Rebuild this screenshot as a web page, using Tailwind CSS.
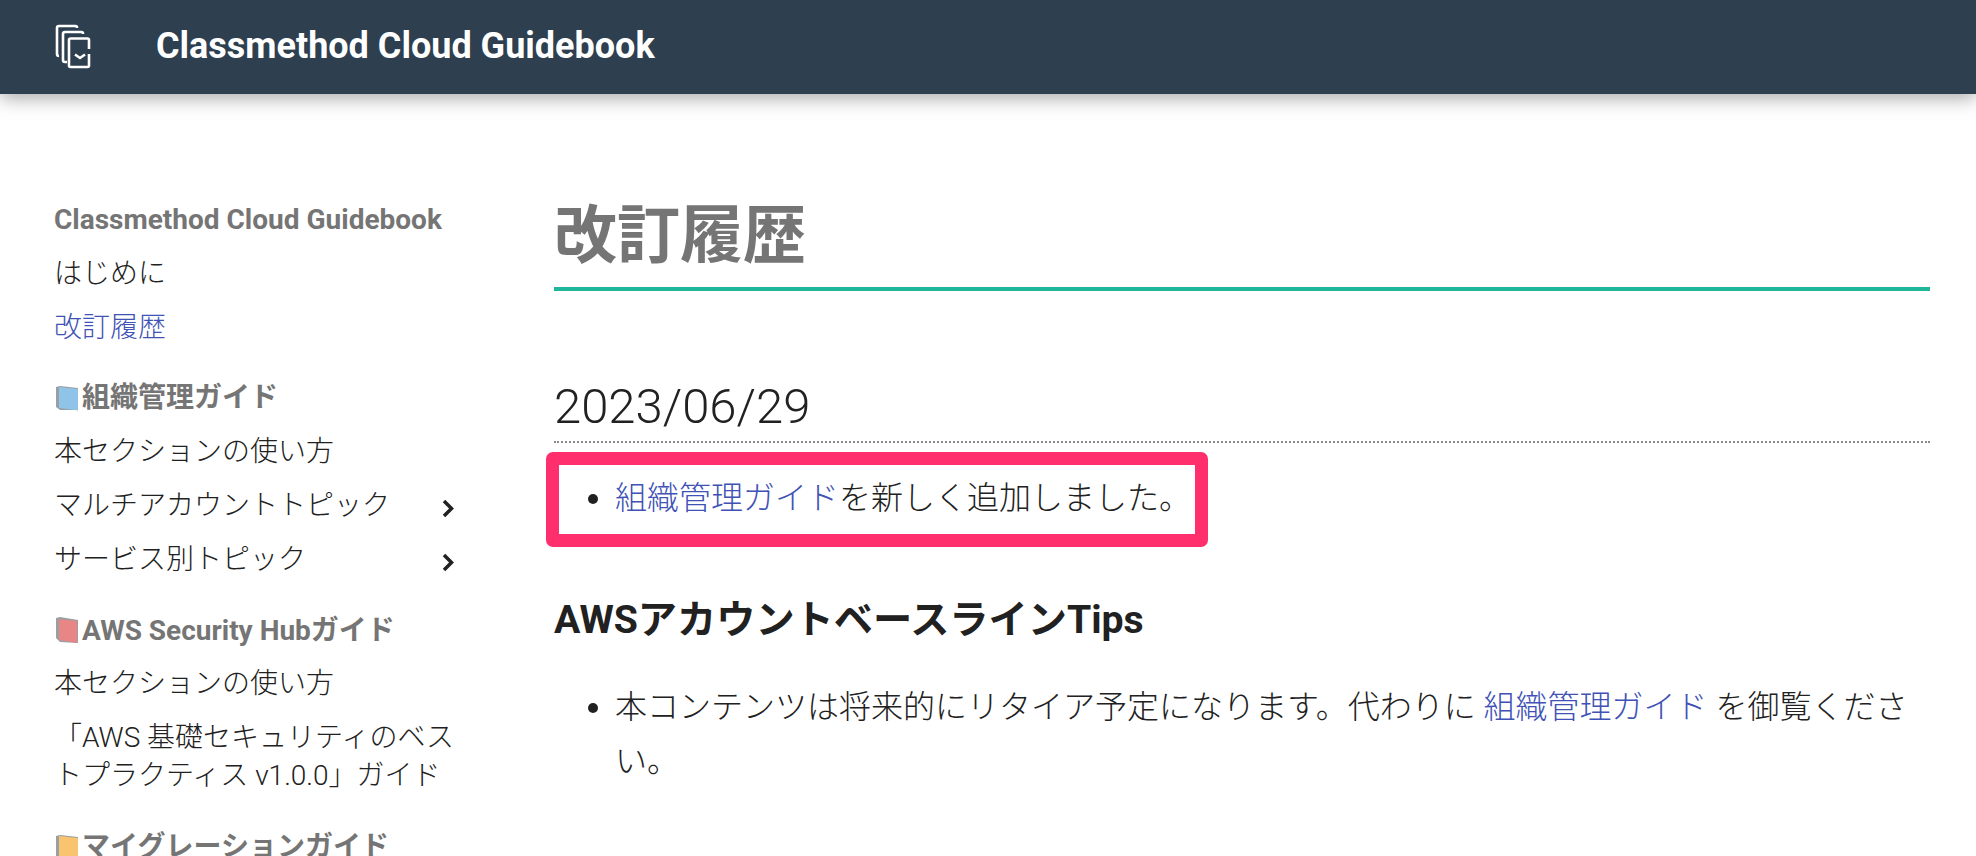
<!DOCTYPE html>
<html lang="ja">

<head>
  <meta charset="UTF-8">
  <title>改訂履歴 - Classmethod Cloud Guidebook</title>
  <script src="https://cdn.jsdelivr.net/npm/@tailwindcss/browser@4"></script>
</head>

<body class="bg-white h-[856px] overflow-hidden font-['Roboto','Noto_Sans_CJK_JP',sans-serif] text-[#212121]">
  <!-- Header -->
  <header class="relative z-10 h-[94px] bg-[#2e3f50] flex items-center shadow-[0_4px_18px_rgba(0,0,0,0.35)]">
    <svg class="ml-[50px] w-[48px] h-[52px] -mt-[1px]" viewBox="50 20 48 52" fill="none" stroke="white" stroke-width="2.6">
      <path d="M77 27V26.5Q77 25 75.5 25H59Q57 25 57 27V53Q57 55 59 55" />
      <path d="M83 33V32.5Q83 31 81.5 31H65Q63 31 63 33V59Q63 61 65 61H67" />
      <path d="M89 48V39Q89 37.5 87.5 37.500H70.500Q69 37.500 69 39V64.500Q69 66 70.500 66H87.500Q89 66 89 64.500V53" />
      <path d="M75 53.500L80 57L85 53.500" />
    </svg>
    <span class="ml-[58px] -mt-[2px] text-[36px] font-bold text-white">Classmethod Cloud Guidebook</span>
  </header>

  <div class="flex">
    <!-- Sidebar -->
    <aside class="w-[554px] shrink-0 pl-[54px] pr-[94px] pt-[99px] text-[28px] leading-[37.8px] font-light">
      <ul>
        <li class="py-[8px] font-bold text-[#757575]">Classmethod Cloud Guidebook</li>
        <li class="py-[8px]">はじめに</li>
        <li class="py-[8px] text-[#4052b5]">改訂履歴</li>
      </ul>
      <ul class="mt-[17px]">
        <li class="py-[8px] font-bold text-[#757575] flex items-center">
          <svg class="w-[28px] h-[28px] shrink-0" viewBox="0 0 28 28">
            <path d="M2 3 6 2 24 4V26L6 26 2 23Z" fill="#9a9fa3" />
            <path d="M5 3 24 5V26.500L5 24Z" fill="#8fc3e8" />
          </svg>
          <span>組織管理ガイド</span>
        </li>
        <li class="py-[8px]">本セクションの使い方</li>
        <li class="py-[8px] flex justify-between items-center">
          <span>マルチアカウントトピック</span>
          <svg class="w-[12px] h-[19px] mt-[5px] mr-[6px]" viewBox="0 0 12 19" fill="none" stroke="#212121" stroke-width="3.500"><path d="M2 2 9.500 9.500 2 17" /></svg>
        </li>
        <li class="py-[8px] flex justify-between items-center">
          <span>サービス別トピック</span>
          <svg class="w-[12px] h-[19px] mt-[5px] mr-[6px]" viewBox="0 0 12 19" fill="none" stroke="#212121" stroke-width="3.500"><path d="M2 2 9.500 9.500 2 17" /></svg>
        </li>
      </ul>
      <ul class="mt-[17px]">
        <li class="py-[8px] font-bold text-[#757575] flex items-center">
          <svg class="w-[28px] h-[28px] shrink-0" viewBox="0 0 28 28">
            <path d="M2 2 6 1 24 4V27L6 26 2 22Z" fill="#9a9fa3" />
            <path d="M5 3 23 5V27L5 24Z" fill="#e88685" />
          </svg>
          <span>AWS Security Hubガイド</span>
        </li>
        <li class="py-[8px]">本セクションの使い方</li>
        <li class="py-[8px]">「AWS 基礎セキュリティのベストプラクティス v1.0.0」ガイド</li>
      </ul>
      <ul class="mt-[17px]">
        <li class="py-[8px] font-bold text-[#757575] flex items-center">
          <svg class="w-[28px] h-[28px] shrink-0" viewBox="0 0 28 28">
            <path d="M2 3 6 2 24 4V26L6 26 2 23Z" fill="#9a9fa3" />
            <path d="M5 3 24 5V26.500L5 24Z" fill="#f8c46f" />
          </svg>
          <span>マイグレーションガイド</span>
        </li>
      </ul>
    </aside>

    <!-- Content -->
    <main class="w-[1376px] pt-[104px]">
      <h1 class="text-[63px] leading-[76px] font-bold text-[#757575] pb-[13px] border-b-4 border-[#20b69a]">改訂履歴</h1>
      <h2 class="mt-[86px] text-[49px] leading-[60px] font-light pb-[4px] border-b-2 border-dotted border-[#8a8a8a]">2023/06/29</h2>

      <div class="relative">
        <ul class="mt-[28px] pl-[61px] list-disc text-[32px] leading-[54px] font-light">
          <li><a class="text-[#4052b5]">組織管理ガイド</a>を新しく追加しました。</li>
        </ul>
        <!-- annotation box -->
        <div class="absolute left-[-8px] top-[-19px] w-[662px] h-[95px] border-[13px] border-[#fe2f6c] rounded-[7px]"></div>
      </div>

      <h3 class="mt-[70px] text-[39.2px] leading-[50px] font-bold">AWSアカウントベースラインTips</h3>
      <ul class="mt-[36px] pl-[61px] list-disc text-[32px] leading-[53.6px] font-light">
        <li>本コンテンツは将来的にリタイア予定になります。代わりに <a class="text-[#4052b5]">組織管理ガイド</a> を御覧ください。</li>
      </ul>
    </main>
  </div>
</body>

</html>
